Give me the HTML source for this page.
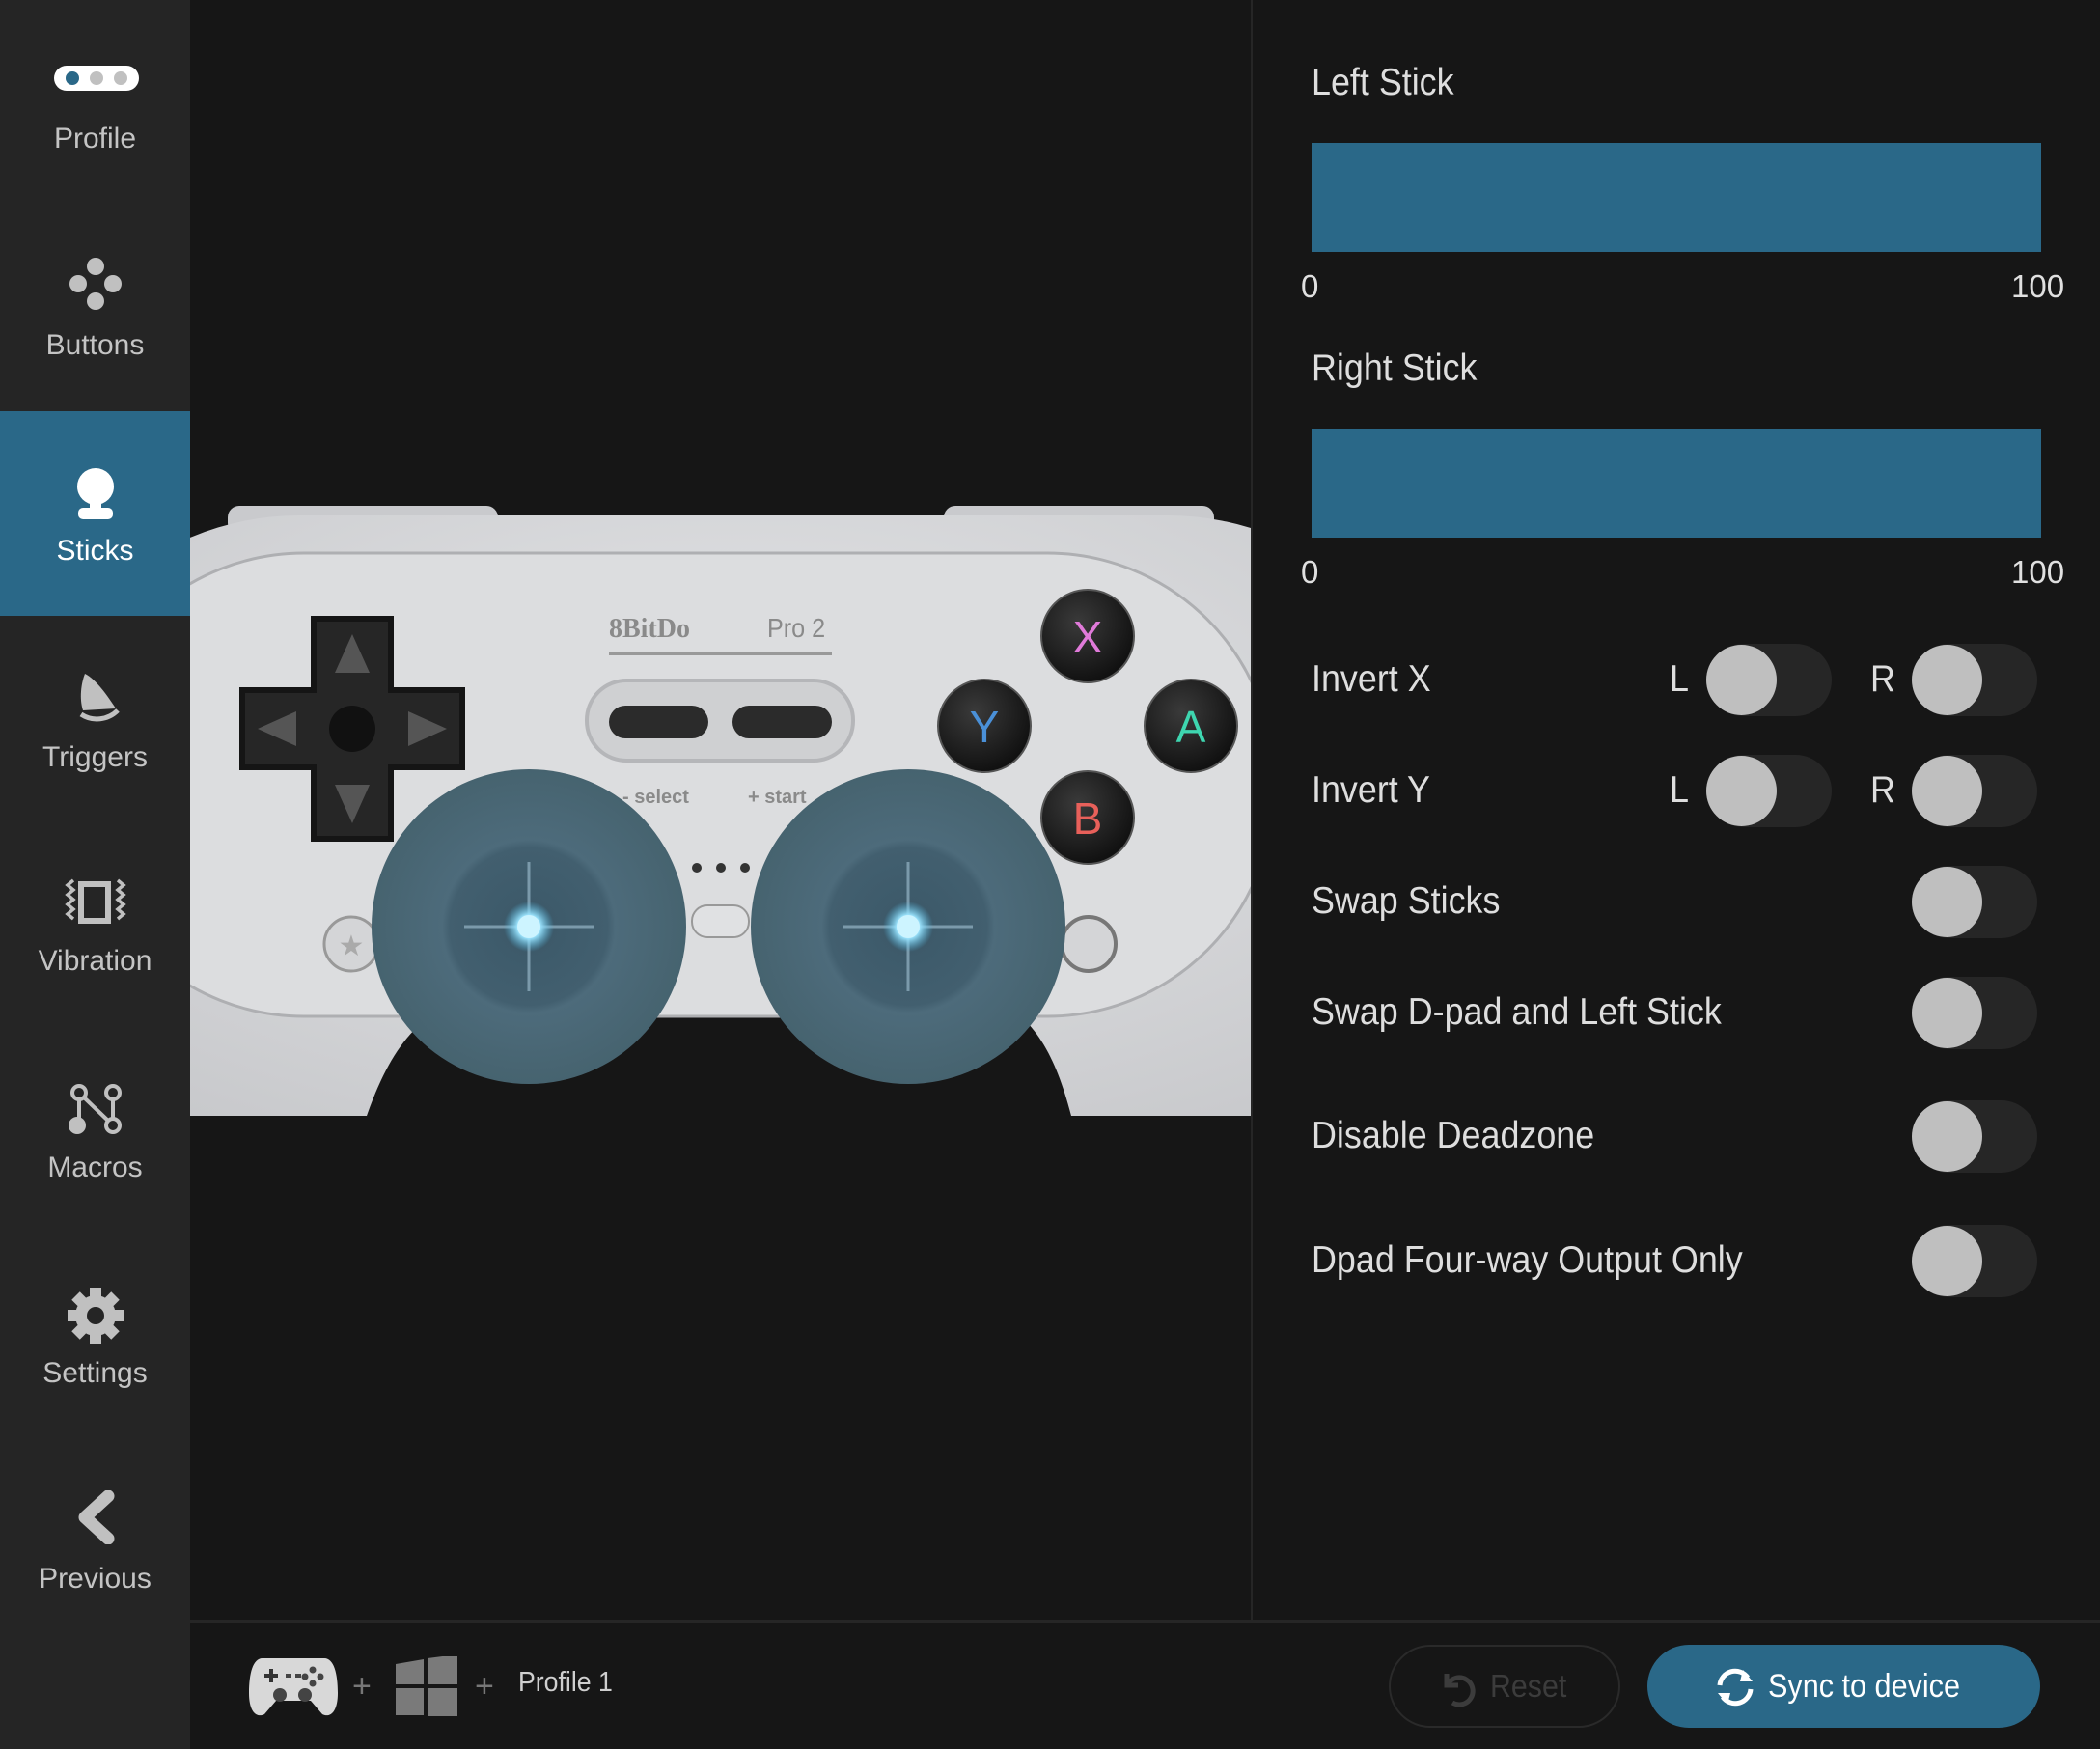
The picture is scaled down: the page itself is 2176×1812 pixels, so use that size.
<!DOCTYPE html>
<html><head><meta charset="utf-8"><style>
*{margin:0;padding:0;box-sizing:border-box}
body{width:2176px;height:1812px;background:#161616;position:relative;overflow:hidden;font-family:"Liberation Sans",sans-serif}
.side{position:absolute;left:0;top:0;width:197px;height:1812px;background:#252525}
.act{position:absolute;left:0;top:426px;width:197px;height:212px;background:#2a6888}
.lbl{position:absolute;left:0;width:197px;text-align:center;color:#c4c4c4;font-size:30px;line-height:30px}
.ico{position:absolute;left:0;width:197px}
.t{position:absolute;color:#dedede;font-size:39px;line-height:40px;transform:scaleX(0.92);transform-origin:0 0;white-space:nowrap}
.bar{position:absolute;left:1359px;width:756px;height:113px;background:#2a6888}
.n{position:absolute;color:#e0e0e0;font-size:33px;line-height:34px}
.tg{position:absolute;width:129px;height:75px;border-radius:38px;background:#262626}
.tg:after{content:"";position:absolute;left:-1px;top:1px;width:73px;height:73px;border-radius:50%;background:#bfbfbf}
</style></head><body>
<div class="side"></div>
<div class="act"></div>
<svg class="ico" style="top:66px" width="197" height="30"><rect x="56" y="2" width="88" height="26" rx="13" fill="#fff"/><circle cx="75" cy="15" r="7" fill="#2a6888"/><circle cx="100" cy="15" r="7" fill="#c0c0c0"/><circle cx="125" cy="15" r="7" fill="#c0c0c0"/></svg>
<div class="lbl" style="top:129px">Profile</div>
<svg class="ico" style="top:266px" width="197" height="56"><g fill="#c0c0c0"><circle cx="99" cy="10" r="9"/><circle cx="81" cy="28" r="9"/><circle cx="117" cy="28" r="9"/><circle cx="99" cy="46" r="9"/></g></svg>
<div class="lbl" style="top:343px">Buttons</div>
<svg class="ico" style="top:484px" width="197" height="56"><circle cx="99" cy="20" r="19" fill="#fff"/><rect x="93" y="30" width="12" height="16" fill="#fff"/><rect x="81" y="42" width="36" height="12" rx="5" fill="#fff"/></svg>
<div class="lbl" style="top:556px;color:#fff">Sticks</div>
<svg class="ico" style="top:694px" width="197" height="56"><path d="M88 4 C100 10 112 28 120 40 L86 42 C82 30 84 14 88 4Z" fill="#c0c0c0"/><path d="M84 46 C96 54 112 52 122 42" stroke="#c0c0c0" stroke-width="5" fill="none"/></svg>
<div class="lbl" style="top:770px">Triggers</div>
<svg class="ico" style="top:908px" width="197" height="54"><rect x="84" y="8" width="28" height="38" fill="none" stroke="#c0c0c0" stroke-width="6"/><path d="M76 4 l-6 5 6 5 -6 5 6 5 -6 5 6 5 -6 5 6 5M122 4 l6 5 -6 5 6 5 -6 5 6 5 -6 5 6 5 -6 5" stroke="#c0c0c0" stroke-width="3.5" fill="none"/></svg>
<div class="lbl" style="top:981px">Vibration</div>
<svg class="ico" style="top:1122px" width="197" height="56"><g stroke="#c0c0c0" stroke-width="4" fill="none"><circle cx="82" cy="10" r="7"/><circle cx="117" cy="10" r="7"/><circle cx="117" cy="44" r="7"/><path d="M82 17 V37 M117 17 V37 M87 15 L112 39"/></g><circle cx="80" cy="44" r="9" fill="#c0c0c0"/></svg>
<div class="lbl" style="top:1195px">Macros</div>
<svg class="ico" style="top:1334px" width="197" height="58"><g transform="translate(99 29)"><g fill="#c0c0c0"><circle r="21"/><g id="tt"><rect x="-6" y="-29" width="12" height="12"/></g><use href="#tt" transform="rotate(45)"/><use href="#tt" transform="rotate(90)"/><use href="#tt" transform="rotate(135)"/><use href="#tt" transform="rotate(180)"/><use href="#tt" transform="rotate(225)"/><use href="#tt" transform="rotate(270)"/><use href="#tt" transform="rotate(315)"/></g><circle r="9" fill="#252525"/></g></svg>
<div class="lbl" style="top:1408px">Settings</div>
<svg class="ico" style="top:1544px" width="197" height="56"><path d="M112 6 L88 28 L112 50" stroke="#c0c0c0" stroke-width="13" fill="none" stroke-linejoin="round" stroke-linecap="round"/></svg>
<div class="lbl" style="top:1621px">Previous</div>

<svg style="position:absolute;left:197px;top:500px" width="1099" height="656" viewBox="197 500 1099 656">
<defs>
<radialGradient id="bg1" cx="50%" cy="35%" r="70%"><stop offset="0" stop-color="#e6e7e9"/><stop offset="1" stop-color="#c6c7ca"/></radialGradient>
<radialGradient id="fb" cx="40%" cy="35%" r="65%"><stop offset="0" stop-color="#3a3a3a"/><stop offset="1" stop-color="#111"/></radialGradient>
<radialGradient id="gl" r="50%"><stop offset="0" stop-color="#e8fbff"/><stop offset=".45" stop-color="#9fe6ff"/><stop offset="1" stop-color="#4fb6e0" stop-opacity="0"/></radialGradient>
<radialGradient id="st" r="50%"><stop offset="0" stop-color="#3b5868"/><stop offset=".5" stop-color="#425f6f"/><stop offset=".55" stop-color="#4d6b7b"/><stop offset="1" stop-color="#46636f"/></radialGradient>
</defs>
<rect x="236" y="524" width="280" height="30" rx="12" fill="#c9cacd"/>
<rect x="978" y="524" width="280" height="30" rx="12" fill="#c9cacd"/>
<rect x="20" y="534" width="1480" height="700" rx="290" fill="url(#bg1)"/>
<path d="M380 1156 C410 1070 450 1027 540 1027 L980 1027 C1060 1027 1090 1080 1110 1156 Z" fill="#161616"/>
<rect x="80" y="573" width="1240" height="480" rx="235" fill="#dcdddf" stroke="#aeafb2" stroke-width="3"/>
<path d="M325 641 v74 h-74 v80 h74 v74 h80 v-74 h74 v-80 h-74 v-74 Z" fill="#262626" stroke="#151515" stroke-width="6"/>
<circle cx="365" cy="755" r="24" fill="#111"/>
<path d="M365 657 l18 40 h-36Z M365 853 l18-40 h-36Z M267 755 l40-18 v36Z M463 755 l-40-18 v36Z" fill="#555"/>
<text x="631" y="660" font-family="Liberation Serif" font-weight="bold" font-size="28" fill="#8a8a8a">8BitDo</text>
<text x="795" y="660" font-size="28" fill="#8a8a8a" transform="translate(795 0) scale(0.9 1) translate(-795 0)">Pro 2</text>
<rect x="631" y="676" width="231" height="3" fill="#999"/>
<rect x="608" y="705" width="276" height="83" rx="41" fill="#cfd0d2" stroke="#b5b6b9" stroke-width="4"/>
<rect x="631" y="731" width="103" height="34" rx="17" fill="#2b2b2b"/>
<rect x="759" y="731" width="103" height="34" rx="17" fill="#2b2b2b"/>
<text x="645" y="832" font-size="20" font-weight="bold" fill="#8a8a8a">- select</text>
<text x="775" y="832" font-size="20" font-weight="bold" fill="#8a8a8a">+ start</text>
<g fill="#333"><circle cx="722" cy="899" r="5"/><circle cx="747" cy="899" r="5"/><circle cx="772" cy="899" r="5"/></g>
<rect x="717" y="938" width="59" height="33" rx="16" fill="#e0e1e3" stroke="#999" stroke-width="2"/>
<circle cx="364" cy="978" r="28" fill="#d4d5d7" stroke="#999" stroke-width="3"/>
<text x="364" y="990" text-anchor="middle" font-size="30" fill="#aaa">★</text>
<circle cx="1128" cy="978" r="28" fill="#d4d5d7" stroke="#777" stroke-width="4"/>
<g font-size="46" text-anchor="middle">
<circle cx="1127" cy="659" r="48" fill="url(#fb)" stroke="#555" stroke-width="2"/><text x="1127" y="676" fill="#e07ad9">X</text>
<circle cx="1020" cy="752" r="48" fill="url(#fb)" stroke="#555" stroke-width="2"/><text x="1020" y="769" fill="#4a90d8">Y</text>
<circle cx="1234" cy="752" r="48" fill="url(#fb)" stroke="#555" stroke-width="2"/><text x="1234" y="769" fill="#3ed6b0">A</text>
<circle cx="1127" cy="847" r="48" fill="url(#fb)" stroke="#555" stroke-width="2"/><text x="1127" y="864" fill="#e8605a">B</text>
</g>
<g>
<circle cx="548" cy="960" r="163" fill="url(#st)"/>
<path d="M481 960 H615 M548 893 V1027" stroke="#7b9aab" stroke-width="3"/>
<circle cx="548" cy="960" r="26" fill="url(#gl)"/><circle cx="548" cy="960" r="12" fill="#cdf4ff"/>
<circle cx="941" cy="960" r="163" fill="url(#st)"/>
<path d="M874 960 H1008 M941 893 V1027" stroke="#7b9aab" stroke-width="3"/>
<circle cx="941" cy="960" r="26" fill="url(#gl)"/><circle cx="941" cy="960" r="12" fill="#cdf4ff"/>
</g>
</svg>

<div style="position:absolute;left:1296px;top:0;width:2px;height:1679px;background:#262626"></div>
<div style="position:absolute;left:197px;top:1678px;width:1979px;height:3px;background:#262626"></div>

<div class="t" style="left:1359px;top:66px">Left Stick</div>
<div class="bar" style="top:148px"></div>
<div class="n" style="left:1348px;top:280px">0</div>
<div class="n" style="left:2084px;top:280px">100</div>
<div class="t" style="left:1359px;top:362px">Right Stick</div>
<div class="bar" style="top:444px"></div>
<div class="n" style="left:1348px;top:576px">0</div>
<div class="n" style="left:2084px;top:576px">100</div>

<div class="t" style="left:1359px;top:684px">Invert X</div>
<div class="t" style="left:1730px;top:684px">L</div><div class="tg" style="left:1769px;top:667px"></div>
<div class="t" style="left:1938px;top:684px">R</div><div class="tg" style="left:1982px;top:667px"></div>
<div class="t" style="left:1359px;top:799px">Invert Y</div>
<div class="t" style="left:1730px;top:799px">L</div><div class="tg" style="left:1769px;top:782px"></div>
<div class="t" style="left:1938px;top:799px">R</div><div class="tg" style="left:1982px;top:782px"></div>
<div class="t" style="left:1359px;top:914px">Swap Sticks</div><div class="tg" style="left:1982px;top:897px"></div>
<div class="t" style="left:1359px;top:1029px">Swap D-pad and Left Stick</div><div class="tg" style="left:1982px;top:1012px"></div>
<div class="t" style="left:1359px;top:1157px">Disable Deadzone</div><div class="tg" style="left:1982px;top:1140px"></div>
<div class="t" style="left:1359px;top:1286px">Dpad Four-way Output Only</div><div class="tg" style="left:1982px;top:1269px"></div>

<svg style="position:absolute;left:258px;top:1714px" width="92" height="66"><path d="M14 4 H78 C88 4 92 20 92 40 C92 60 84 66 76 62 L64 48 H28 L16 62 C8 66 0 60 0 40 C0 20 4 4 14 4Z" fill="#d8d8d8"/><path d="M16 22 h14 M23 15 v14" stroke="#333" stroke-width="4"/><g fill="#444"><circle cx="66" cy="16" r="3.5"/><circle cx="74" cy="23" r="3.5"/><circle cx="58" cy="23" r="3.5"/><circle cx="66" cy="30" r="3.5"/><circle cx="32" cy="42" r="7"/><circle cx="58" cy="42" r="7"/><rect x="38" y="20" width="6" height="4"/><rect x="48" y="20" width="6" height="4"/></g></svg>
<div style="position:absolute;left:365px;top:1728px;color:#777;font-size:34px">+</div>
<svg style="position:absolute;left:410px;top:1716px" width="64" height="62"><g fill="#7a7a7a"><path d="M0 8 L29 3 V29 H0Z"/><path d="M33 2 L64 -2 V29 H33Z"/><rect x="0" y="33" width="29" height="28"/><rect x="33" y="33" width="31" height="29"/></g></svg>
<div style="position:absolute;left:492px;top:1728px;color:#777;font-size:34px">+</div>
<div style="position:absolute;left:537px;top:1727px;color:#cfcfcf;font-size:29px;transform:scaleX(0.92);transform-origin:0 0">Profile 1</div>

<div style="position:absolute;left:1439px;top:1704px;width:240px;height:86px;border:2px solid #2a2a2a;border-radius:43px"></div>
<div style="position:absolute;left:1544px;top:1704px;color:#3c3c3c;font-size:33px;line-height:86px;transform:scaleX(0.92);transform-origin:0 0">Reset</div>
<svg style="position:absolute;left:1489px;top:1726px" width="44" height="44"><path d="M10 8 V20 H22 M11 19 A14 14 0 1 1 16 38" stroke="#3c3c3c" stroke-width="5" fill="none"/></svg>
<div style="position:absolute;left:1707px;top:1704px;width:407px;height:86px;border-radius:43px;background:#2a6888"></div>
<div style="position:absolute;left:1832px;top:1704px;color:#fff;font-size:34px;line-height:86px;transform:scaleX(0.9);transform-origin:0 0;white-space:nowrap">Sync to device</div>
<svg style="position:absolute;left:1776px;top:1726px" width="44" height="44"><g stroke="#fff" stroke-width="5" fill="none"><path d="M6 20 A16 16 0 0 1 35 12"/><path d="M38 24 A16 16 0 0 1 9 32"/></g><path d="M30 4 L40 16 L27 16Z M14 40 L4 28 L17 28Z" fill="#fff"/></svg>
</body></html>
